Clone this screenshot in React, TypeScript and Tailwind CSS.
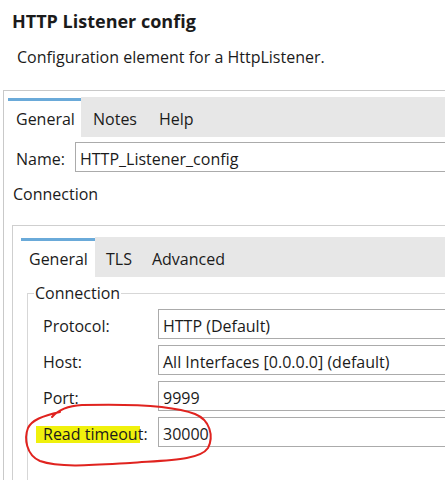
import React from "react";

type Tab = { label: string };

function TabStrip({ active, rest, narrow }: { active: string; rest: Tab[]; narrow?: boolean }) {
  return (
    <div className="flex h-[40px]">
      <div
        className={
          narrow
            ? "mt-[1px] h-[40px] w-[73px] border-t-[3px] border-[#6aaad9] bg-white pl-[8px] pt-[8px] leading-[20px]"
            : "mt-[1px] h-[40px] w-[74px] border-t-[3px] border-[#6aaad9] bg-white pl-[8px] pt-[8px] leading-[20px]"
        }
      >
        {active}
      </div>
      <div
        className={
          narrow
            ? "flex flex-1 gap-[22px] bg-[#e7e7e7] pl-[12px] pt-[12px] leading-[20px]"
            : "flex flex-1 gap-[20px] bg-[#e7e7e7] pl-[11px] pt-[12px] leading-[20px]"
        }
      >
        {rest.map((t) => (
          <span key={t.label}>{t.label}</span>
        ))}
      </div>
    </div>
  );
}

function Field({ label, value, mark }: { label: string; value: string; mark?: boolean }) {
  return (
    <div className="flex h-[30px]">
      <div className="relative w-[115px] shrink-0 pt-[7px] leading-[20px]">
        {mark && <span className="absolute left-[-7px] top-[9px] h-[17px] w-[104px] bg-[#f0f10c]" />}
        <span className="relative">{label}</span>
      </div>
      <div className="flex-1 border border-[#ababab] bg-white pl-[4px] pt-[6px] leading-[20px]">{value}</div>
    </div>
  );
}

export default function App() {
  return (
    <div className="relative h-[480px] w-[445px] overflow-hidden bg-white font-['Open_Sans',sans-serif] text-[16px] text-[#1b1b1b]">
      <div className="pl-[12px] pt-[9px] text-[18px] font-bold leading-[24px]">HTTP Listener config</div>
      <div className="mt-[14px] pl-[17px] leading-[20px]">Configuration element for a HttpListener.</div>

      {/* outer editor panel */}
      <div className="ml-[3px] mt-[23px] h-[400px] w-[600px] border-l border-t border-[#c9c9c9]">
        <div className="pt-[6px] pl-[4px]">
          <TabStrip narrow active="General" rest={[{ label: "Notes" }, { label: "Help" }]} />
        </div>

        <div className="mt-[5px] flex h-[30px]">
          <div className="w-[71px] shrink-0 pl-[12px] pt-[7px] leading-[20px]">Name:</div>
          <div className="flex-1 border border-[#ababab] pl-[4px] pt-[6px] leading-[20px]">HTTP_Listener_config</div>
        </div>

        <div className="mt-[12px] pl-[9px] leading-[20px]">Connection</div>

        {/* nested connection panel */}
        <div className="ml-[8px] mt-[21px] h-[300px] border-l border-t border-[#cfcfcf]">
          <div className="pl-[8px] pt-[11px]">
            <TabStrip active="General" rest={[{ label: "TLS" }, { label: "Advanced" }]} />
          </div>

          <fieldset className="ml-[14px] mt-[6px] h-[200px] border border-[#d7d7d7] pl-[15px]">
            <legend className="-ml-[9px] px-[1px] leading-[20px]">Connection</legend>
            <div className="mt-[6px] flex flex-col gap-[6px]">
              <Field label="Protocol:" value="HTTP (Default)" />
              <Field label="Host:" value="All Interfaces [0.0.0.0] (default)" />
              <Field label="Port:" value="9999" />
              <Field label="Read timeout:" value="30000" mark />
            </div>
          </fieldset>
        </div>
      </div>

      {/* hand-drawn red circle annotation */}
      <svg className="pointer-events-none absolute left-0 top-0" width="445" height="480" viewBox="0 0 445 480" fill="none">
        <path
          d="M 52 417 C 58 410, 66 406, 82 405 C 120 404, 170 404, 195 414 C 210 420, 214 436, 208 448 C 200 460, 170 460, 130 463 C 95 465, 60 468, 40 461 C 26 455, 24 438, 28 428 C 32 420, 42 416, 60 412"
          stroke="#e0231f"
          strokeWidth="2"
          strokeLinecap="round"
        />
      </svg>
    </div>
  );
}
